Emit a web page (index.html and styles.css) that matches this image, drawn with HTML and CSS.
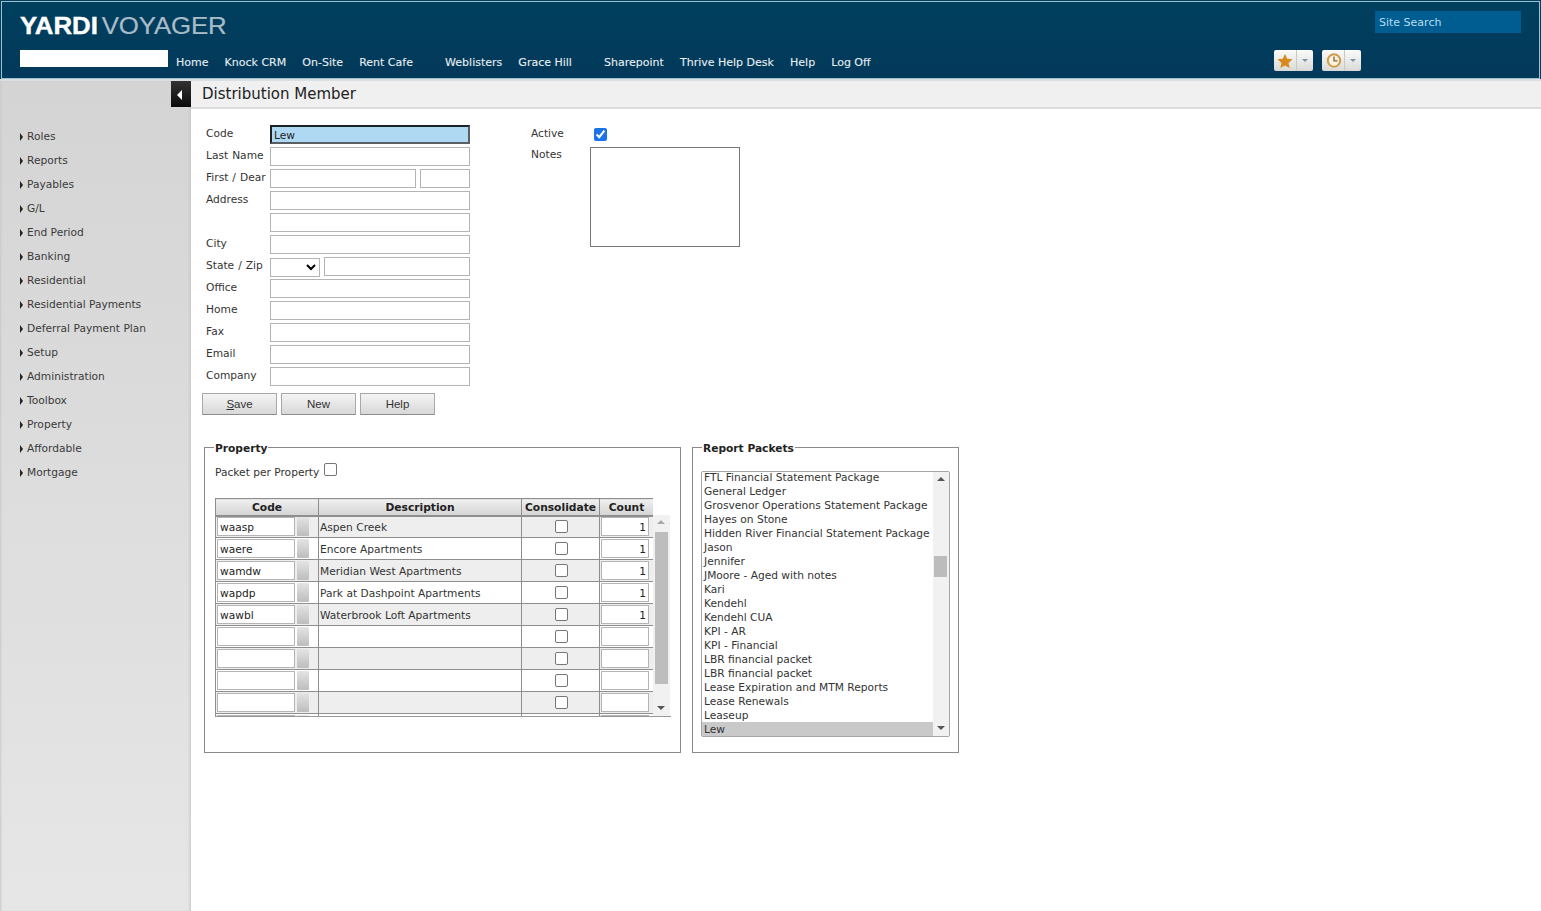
FILE: index.html
```html
<!DOCTYPE html>
<html lang="en">
<head>
<meta charset="utf-8">
<title>Distribution Member</title>
<link rel="stylesheet" href="styles.css">
</head>
<body>
<header class="topbar">
  <div class="topbar-inner">
    <div class="brand-row">
      <div class="logo"><span class="logo-a">YARDI</span><span class="logo-b">VOYAGER</span></div>
      <div class="site-search">Site Search</div>
    </div>
    <div class="nav-row">
      <div class="white-box"></div>
      <nav class="nav">
        <a>Home</a><a>Knock CRM</a><a>On-Site</a><a>Rent Cafe</a><a class="nav-empty"></a><a>Weblisters</a><a>Grace Hill</a><a class="nav-empty"></a><a>Sharepoint</a><a>Thrive Help Desk</a><a>Help</a><a>Log Off</a>
      </nav>
      <div class="tools">
        <div class="tool">
          <span class="tool-main"><svg width="16" height="16" viewBox="0 0 16 16"><path d="M8 .8l2.2 4.9 5.3.6-4 3.6 1.1 5.2L8 12.4l-4.6 2.7 1.1-5.2-4-3.6 5.3-.6z" fill="#d98a1e"/></svg></span>
          <span class="tool-drop"></span>
        </div>
        <div class="tool">
          <span class="tool-main"><svg width="17" height="17" viewBox="0 0 17 17"><circle cx="9" cy="8.5" r="6.2" fill="#fbf3df" stroke="#cf9a4a" stroke-width="2"/><path d="M9 4.5v4.3h3.6" fill="none" stroke="#7d6238" stroke-width="1.3"/></svg></span>
          <span class="tool-drop"></span>
        </div>
      </div>
    </div>
  </div>
</header>

<div class="shell">
  <aside class="sidebar">
    <ul class="menu">
      <li>Roles</li><li>Reports</li><li>Payables</li><li>G/L</li><li>End Period</li><li>Banking</li><li>Residential</li><li>Residential Payments</li><li>Deferral Payment Plan</li><li>Setup</li><li>Administration</li><li>Toolbox</li><li>Property</li><li>Affordable</li><li>Mortgage</li>
    </ul>
  </aside>
  <main class="main">
    <button class="collapse" type="button" aria-label="Collapse"></button>
    <h1 class="title">Distribution Member</h1>

    <div class="form-top">
      <div class="fields">
        <label>Code</label><input class="inp focus" value="Lew">
        <label>Last Name</label><input class="inp">
        <label>First / Dear</label><div class="pair"><input class="inp first"><input class="inp dear"></div>
        <label>Address</label><input class="inp">
        <label></label><input class="inp">
        <label>City</label><input class="inp">
        <label>State / Zip</label><div class="pair tight"><select class="state"><option></option></select><input class="inp zip"></div>
        <label>Office</label><input class="inp">
        <label>Home</label><input class="inp">
        <label>Fax</label><input class="inp">
        <label>Email</label><input class="inp">
        <label>Company</label><input class="inp">
      </div>
      <div class="side-fields">
        <div class="active-row"><span class="side-label">Active</span><input class="active-check" type="checkbox" checked></div>
        <div class="notes-row"><span class="side-label">Notes</span><textarea class="notes"></textarea></div>
      </div>
    </div>

    <div class="buttons">
      <button class="btn" type="button"><u>S</u>ave</button>
      <button class="btn" type="button">New</button>
      <button class="btn" type="button">Help</button>
    </div>

    <div class="groups">
      <fieldset class="group group-prop">
        <legend>Property</legend>
        <div class="packet-row"><span>Packet per Property</span><input class="box" type="checkbox"></div>
        <div class="grid-wrap">
          <div class="grid-clip">
            <table class="grid">
              <thead><tr><th class="c1">Code</th><th class="c2">Description</th><th class="c3">Consolidate</th><th class="c4">Count</th></tr></thead>
              <tbody>
                <tr class="alt"><td class="code"><div class="code-in"><input class="cell-in" value="waasp"><span class="lookup"></span></div></td><td class="desc">Aspen Creek</td><td class="chk"><input class="box" type="checkbox"></td><td class="cnt"><input class="cell-in num" value="1"></td></tr>
                <tr><td class="code"><div class="code-in"><input class="cell-in" value="waere"><span class="lookup"></span></div></td><td class="desc">Encore Apartments</td><td class="chk"><input class="box" type="checkbox"></td><td class="cnt"><input class="cell-in num" value="1"></td></tr>
                <tr class="alt"><td class="code"><div class="code-in"><input class="cell-in" value="wamdw"><span class="lookup"></span></div></td><td class="desc">Meridian West Apartments</td><td class="chk"><input class="box" type="checkbox"></td><td class="cnt"><input class="cell-in num" value="1"></td></tr>
                <tr><td class="code"><div class="code-in"><input class="cell-in" value="wapdp"><span class="lookup"></span></div></td><td class="desc">Park at Dashpoint Apartments</td><td class="chk"><input class="box" type="checkbox"></td><td class="cnt"><input class="cell-in num" value="1"></td></tr>
                <tr class="alt"><td class="code"><div class="code-in"><input class="cell-in" value="wawbl"><span class="lookup"></span></div></td><td class="desc">Waterbrook Loft Apartments</td><td class="chk"><input class="box" type="checkbox"></td><td class="cnt"><input class="cell-in num" value="1"></td></tr>
                <tr><td class="code"><div class="code-in"><input class="cell-in"><span class="lookup"></span></div></td><td class="desc"></td><td class="chk"><input class="box" type="checkbox"></td><td class="cnt"><input class="cell-in num"></td></tr>
                <tr class="alt"><td class="code"><div class="code-in"><input class="cell-in"><span class="lookup"></span></div></td><td class="desc"></td><td class="chk"><input class="box" type="checkbox"></td><td class="cnt"><input class="cell-in num"></td></tr>
                <tr><td class="code"><div class="code-in"><input class="cell-in"><span class="lookup"></span></div></td><td class="desc"></td><td class="chk"><input class="box" type="checkbox"></td><td class="cnt"><input class="cell-in num"></td></tr>
                <tr class="alt"><td class="code"><div class="code-in"><input class="cell-in"><span class="lookup"></span></div></td><td class="desc"></td><td class="chk"><input class="box" type="checkbox"></td><td class="cnt"><input class="cell-in num"></td></tr>
                <tr><td class="code"><div class="code-in"><input class="cell-in"><span class="lookup"></span></div></td><td class="desc"></td><td class="chk"><input class="box" type="checkbox"></td><td class="cnt"><input class="cell-in num"></td></tr>
              </tbody>
            </table>
          </div>
          <div class="vbar grid-bar">
            <span class="arrow up"></span>
            <span class="track"><span class="thumb"></span></span>
            <span class="arrow down"></span>
          </div>
        </div>
      </fieldset>

      <fieldset class="group group-rep">
        <legend>Report Packets</legend>
        <div class="listbox">
          <ul class="list">
            <li>FTL Financial Statement Package</li>
            <li>General Ledger</li>
            <li>Grosvenor Operations Statement Package</li>
            <li>Hayes on Stone</li>
            <li>Hidden River Financial Statement Package</li>
            <li>Jason</li>
            <li>Jennifer</li>
            <li>JMoore - Aged with notes</li>
            <li>Kari</li>
            <li>Kendehl</li>
            <li>Kendehl CUA</li>
            <li>KPI - AR</li>
            <li>KPI - Financial</li>
            <li>LBR financial packet</li>
            <li>LBR financial packet</li>
            <li>Lease Expiration and MTM Reports</li>
            <li>Lease Renewals</li>
            <li>Leaseup</li>
            <li class="sel">Lew</li>
          </ul>
          <div class="vbar list-bar">
            <span class="arrow up dark"></span>
            <span class="track"><span class="thumb"></span></span>
            <span class="arrow down dark"></span>
          </div>
        </div>
      </fieldset>
    </div>
  </main>
</div>
</body>
</html>
```
FILE: styles.css
```css
* { box-sizing: border-box; }
html, body { margin: 0; height: 911px; overflow: hidden; }
body { font-family: "DejaVu Sans", Verdana, sans-serif; font-size: 10.65px; color: #222; background: #fff; display: flex; flex-direction: column; }

/* header */
.topbar { height: 81px; padding: 1px 1px 0; background: #003f5e; border-bottom: 2px solid #d9dfe3; flex: none; }
.topbar-inner { height: 78px; border: 1px solid #9fc0cf; background: linear-gradient(#003f5e, #03395a); padding: 9px 18px 0 18px; display: flex; flex-direction: column; }
.brand-row { display: flex; justify-content: space-between; height: 39px; }
.logo { font-family: "Liberation Sans", Arial, sans-serif; font-size: 24px; line-height: 30px; display: flex; transform: scaleX(1.075); transform-origin: left center; }
.logo-a { color: #fff; font-weight: 700; margin-right: 3.5px; -webkit-text-stroke: 0.4px #fff; }
.logo-b { color: #a9bcc8; font-weight: 400; letter-spacing: -0.1px; -webkit-text-stroke: 0.2px #a9bcc8; }
.site-search { width: 146px; height: 22px; background: #005d92; color: #b9dcf0; padding: 0 4px; line-height: 24px; font-size: 11px; }
.nav-row { display: flex; align-items: flex-start; }
.white-box { width: 148px; height: 17px; background: #fff; flex: none; }
.nav { display: flex; gap: 16.1px; margin-left: 8px; color: #e8eef2; font-size: 11px; line-height: 26px; flex: none; -webkit-text-stroke: 0.1px #e8eef2; }
.nav-empty { width: 0; }
.tools { display: flex; gap: 9px; margin-left: auto; margin-right: 160px; }
.tool { width: 39px; height: 21px; display: flex; background: linear-gradient(#fbfbf9, #d9d9d6); border-radius: 2px; }
.tool-main { width: 23px; display: flex; align-items: center; justify-content: center; border-right: 1px solid #c8c8c8; }
.tool-drop { flex: 1; position: relative; }
.tool-drop::after { content: ""; position: absolute; left: 5px; top: 9px; border: 3px solid transparent; border-top: 3px solid #7f94a6; border-bottom: 0; }

/* shell */
.shell { flex: 1; display: flex; min-height: 0; }
.sidebar { width: 191px; flex: none; background: linear-gradient(#d4d4d4, #e6e6e6); box-shadow: inset -3px 0 3px -2px #c4c4c4, inset 2px 0 2px -1px #c9c9c9; padding-top: 44px; }
.menu { list-style: none; margin: 0; padding: 0 0 0 27px; }
.menu li { height: 24px; line-height: 24px; color: #3a3a3a; position: relative; }
.menu li::before { content: ""; position: absolute; left: -7px; top: 8px; border: 4px solid transparent; border-left: 3px solid #222; border-right: 0; }

.main { flex: 1; min-width: 0; position: relative; }
.collapse { position: absolute; left: -20px; top: 0; width: 20px; height: 26px; border: 0; padding: 0; background: linear-gradient(#333, #0a0a0a); }
.collapse::after { content: ""; position: absolute; left: 6px; top: 9px; border: 5px solid transparent; border-right: 5px solid #fff; border-left: 0; }
.title { margin: 0; height: 28px; background: #f0f0f0; border-bottom: 2px solid #dcdcdc; font-weight: 400; font-size: 15px; line-height: 27px; padding-left: 11px; color: #222; }

/* top form */
.form-top { display: flex; padding: 16px 0 0 15px; height: 284px; }
.fields { display: grid; grid-template-columns: 64px 200px; grid-auto-rows: 20px; row-gap: 2px; width: 264px; align-items: start; }
.fields label { line-height: 16px; padding-top: 1px; color: #333; white-space: nowrap; word-spacing: 0.6px; }
.inp { display: block; width: 100%; height: 19px; border: 1px solid #b4b4b4; background: #fff; font: inherit; color: #222; padding: 1px 3px; margin: 0; outline: 0; border-radius: 0; }
.focus { border: 2px solid; border-color: #1d2226 #5a5f63 #5a5f63 #1d2226; background: #afd8f2; padding: 2px 2px 0; }
.pair { display: flex; gap: 4px; }
.pair .first { width: 146px; }
.pair .dear { width: 50px; }
.tight { padding-top: 1px; }
.state { width: 50px; height: 19px; border: 1px solid #b4b4b4; background: #fff; margin: 0; flex: none; font: inherit; border-radius: 0; }
.pair .zip { width: 146px; margin-top: -1px; }
.side-fields { margin-left: 61px; padding-top: 1px; }
.active-row { display: flex; height: 21px; }
.side-label { width: 59px; line-height: 16px; color: #333; flex: none; }
.active-check { margin: 2px 0 0 4px; width: 13px; height: 13px; accent-color: #1a73e8; }
.notes-row { display: flex; }
.notes { width: 150px; height: 100px; border: 1px solid #777; margin: 0; resize: none; outline: 0; background: #fff; border-radius: 0; }

/* buttons */
.buttons { display: flex; gap: 4px; padding-left: 11px; }
.btn { width: 75px; height: 22px; border: 1px solid #a8a8a8; border-bottom-color: #8c8c8c; background: linear-gradient(#f4f4f4, #d8d8d8); font-family: "Liberation Sans", Arial, sans-serif; font-size: 11.5px; color: #333; padding: 0; border-radius: 0; }

/* groups */
.groups { display: flex; gap: 11px; padding: 25px 0 0 13px; align-items: flex-start; }
.group { margin: 0; border: 1px solid #8a8a8a; padding: 0; height: 313px; min-width: 0; }
.group legend { font-weight: 700; color: #222; padding: 2px 1px 0; margin-left: 9px; line-height: 13px; font-size: 10.65px; }
.group-prop { width: 477px; }
.group-rep { width: 267px; }
.packet-row { display: flex; align-items: flex-start; gap: 5px; padding: 10px 0 0 10px; height: 43px; color: #333; line-height: 16px; }
.box { appearance: none; width: 13px; height: 13px; border: 1px solid #767676; border-radius: 2px; background: #fff; margin: 0; display: block; }
.packet-row .box { margin-top: -2px; }

.grid-wrap { display: flex; margin-left: 10px; width: 456px; height: 219px; border-bottom: 1px solid #999; }
.grid-clip { width: 438px; overflow: hidden; height: 218px; }
.grid { border-collapse: collapse; table-layout: fixed; width: 438px; }
.grid th { height: 17px; padding: 2px 0 0; background: linear-gradient(#f0f0f0, #d4d4d4); border: 1px solid #8e8e8e; border-bottom-width: 2px; font-size: 10.7px; font-weight: 700; color: #222; line-height: 13px; }
.c1 { width: 103px; } .c2 { width: 203px; } .c3 { width: 78px; } .c4 { width: 54px; }
.grid td { height: 22px; padding: 0; border: 1px solid #8e8e8e; background: #fff; overflow: hidden; }
.grid .alt td { background: #eeeeee; }
.code-in { display: flex; gap: 2px; padding-left: 1px; align-items: center; }
.cell-in { width: 78px; height: 19px; border: 1px solid #b4b4b4; background: #fff; font: inherit; color: #222; padding: 2px 2px 0; margin: 0; outline: 0; border-radius: 0; display: block; }
.lookup { width: 12px; height: 19px; background: linear-gradient(#e4e4e4, #bdbdbd); border-radius: 1px; flex: none; }
.grid .desc { padding: 2px 0 0 1px; color: #333; line-height: 14px; }
.grid .chk { padding-left: 2px; }
.chk .box { margin: 0 auto; }
.cnt .num { width: 48px; margin-left: 1px; text-align: right; padding-right: 2px; }

.vbar { display: flex; flex-direction: column; background: #f1f1f1; align-items: center; flex: none; }
.grid-bar { width: 17px; margin-top: 17px; height: 201px; }
.grid-bar .track { flex: 1; width: 13px; padding-top: 0; margin: 0; }
.grid-bar .thumb { display: block; height: 152px; background: #bdbdbd; }
.arrow { height: 17px; width: 17px; flex: none; position: relative; }
.arrow::after { content: ""; position: absolute; left: 4px; border: 4px solid transparent; }
.arrow.up::after { top: 5px; border-bottom: 4px solid #a8a8a8; border-top: 0; }
.arrow.down::after { top: 7px; border-top: 4px solid #555; border-bottom: 0; }
.arrow.up.dark::after { border-bottom-color: #555; }

.listbox { display: flex; margin: 16px 0 0 8px; width: 249px; height: 266px; border: 1px solid #a6a6a6; border-radius: 2px; overflow: hidden; }
.list { list-style: none; margin: -1px 0 0; padding: 0; width: 231px; flex: none; color: #333; }
.list li { height: 14px; line-height: 14px; padding-left: 2px; white-space: nowrap; }
.list .sel { background: #c9c9c9; height: 15px; margin-top: -1px; line-height: 16px; }
.list-bar { width: 17px; flex: none; }
.list-bar .track { flex: 1; width: 13px; padding-top: 67px; margin-left: -2px; }
.list-bar .thumb { display: block; height: 21px; background: #bcbcbc; }
```
